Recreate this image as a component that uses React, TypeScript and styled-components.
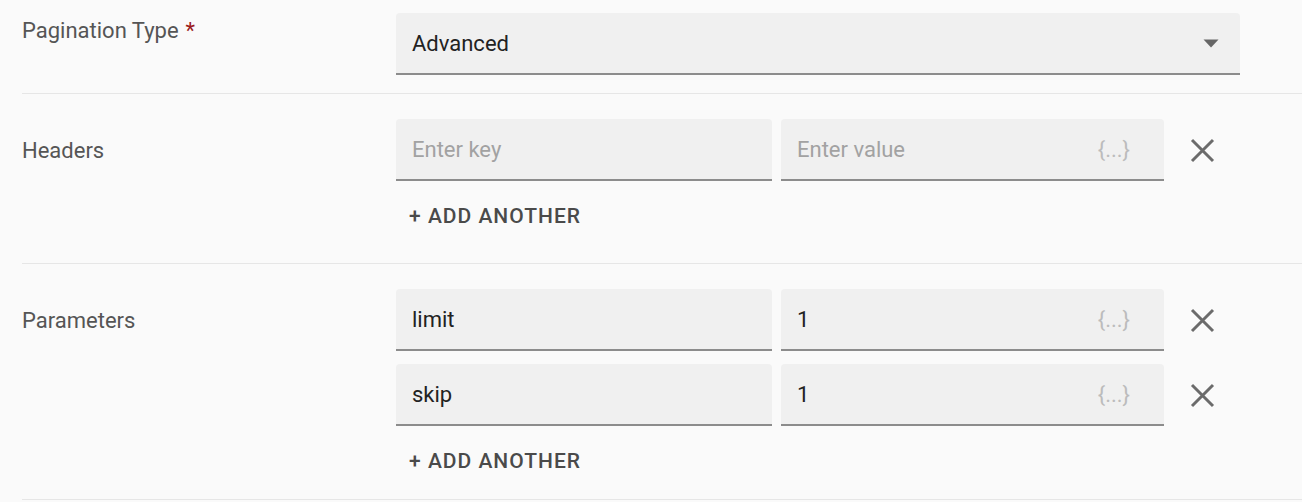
import React from "react";
import styled, { createGlobalStyle } from "styled-components";

const Global = createGlobalStyle`
  html, body { margin: 0; padding: 0; background: #fafafa; }
  body { font-family: Roboto, "Noto Sans", Arial, sans-serif; }
`;

const Page = styled.div`
  width: 1302px;
  height: 502px;
  background: #fafafa;
  padding-left: 22px;
  box-sizing: border-box;
  overflow: hidden;
`;

const Row = styled.div<{ $pt: number; $pb: number }>`
  display: grid;
  grid-template-columns: 374px 844px;
  padding-top: ${(p) => p.$pt}px;
  padding-bottom: ${(p) => p.$pb}px;
  border-bottom: 1px solid #e6e6e6;
`;

const Label = styled.div<{ $top: number }>`
  font-size: 22px;
  color: #555555;
  padding-top: ${(p) => p.$top}px;
  line-height: 24px;
`;

const Star = styled.span`
  color: #9b1c1c;
  margin-left: 7px;
`;

const Fields = styled.div`
  display: flex;
  flex-direction: column;
  gap: 13px;
`;

const Field = styled.div<{ $w: number }>`
  width: ${(p) => p.$w}px;
  flex-shrink: 0;
  height: 62px;
  box-sizing: border-box;
  background: #f0f0f0;
  border-bottom: 2px solid #8c8c8c;
  border-radius: 4px 4px 0 0;
  display: flex;
  align-items: center;
  padding: 0 16px;
  font-size: 22px;
`;

const Value = styled.span<{ $ph?: boolean }>`
  flex: 1;
  color: ${(p) => (p.$ph ? "#a2a2a2" : "#222222")};
`;

const Braces = styled.span`
  color: #bcbcbc;
  font-size: 22px;
  margin-right: 18px;
`;

const Pair = styled.div`
  display: flex;
  gap: 9px;
  align-items: center;
`;

const Remove = styled.button`
  width: 58px;
  flex-shrink: 0;
  height: 62px;
  border: none;
  background: transparent;
  padding: 0;
  display: flex;
  align-items: center;
  justify-content: center;
  cursor: pointer;
`;

const AddButton = styled.button`
  align-self: flex-start;
  border: none;
  background: transparent;
  font-family: Roboto, Arial, sans-serif;
  font-size: 21px;
  line-height: 25px;
  font-weight: 500;
  letter-spacing: 1px;
  color: #4a4a4a;
  padding: 8px 13px;
  margin-top: 2px;
  cursor: pointer;
`;

const CaretBox = styled.span`
  display: flex;
  margin-right: 5px;
`;

const Caret = () => (
  <svg width="16" height="9" viewBox="0 0 16 9">
    <path d="M0.5 0.5 L15.5 0.5 L8 8.5 Z" fill="#666666" />
  </svg>
);

const Cross = () => (
  <svg width="25" height="25" viewBox="0 0 25 25">
    <path d="M2 2 L23 23 M23 2 L2 23" stroke="#6b6b6b" strokeWidth="3" />
  </svg>
);

const KV = ({ k, v }: { k?: string; v?: string }) => (
  <Pair>
    <Field $w={376}>
      <Value $ph={!k}>{k || "Enter key"}</Value>
    </Field>
    <Field $w={383}>
      <Value $ph={!v}>{v || "Enter value"}</Value>
      <Braces>{"{...}"}</Braces>
    </Field>
    <Remove aria-label="remove">
      <Cross />
    </Remove>
  </Pair>
);

export default function App() {
  return (
    <>
      <Global />
      <Page>
        <Row $pt={13} $pb={18}>
          <Label $top={6}>
            Pagination Type<Star>*</Star>
          </Label>
          <Fields>
            <Field $w={844}>
              <Value>Advanced</Value>
              <CaretBox>
                <Caret />
              </CaretBox>
            </Field>
          </Fields>
        </Row>
        <Row $pt={25} $pb={26}>
          <Label $top={20}>Headers</Label>
          <Fields>
            <KV />
            <AddButton>+ ADD ANOTHER</AddButton>
          </Fields>
        </Row>
        <Row $pt={25} $pb={17}>
          <Label $top={20}>Parameters</Label>
          <Fields>
            <KV k="limit" v="1" />
            <KV k="skip" v="1" />
            <AddButton>+ ADD ANOTHER</AddButton>
          </Fields>
        </Row>
      </Page>
    </>
  );
}
